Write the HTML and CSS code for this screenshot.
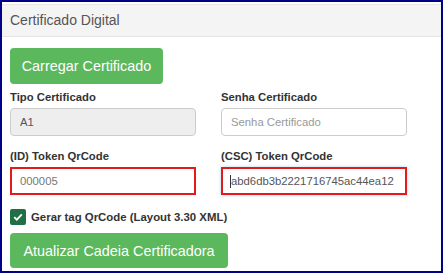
FILE: index.html
```html
<!DOCTYPE html>
<html lang="pt-BR">
<head>
  <meta charset="UTF-8">
  <title>Certificado Digital</title>
  <link rel="stylesheet" href="styles.css">
</head>
<body>
  <div class="frame">
    <div class="panel-heading">Certificado Digital</div>
    <div class="panel-body">
      <button type="button" class="btn btn-load">Carregar Certificado</button>

      <div class="row">
        <div class="field">
          <label for="tipo">Tipo Certificado</label>
          <input type="text" id="tipo" value="A1" disabled>
        </div>
        <div class="field">
          <label for="senha">Senha Certificado</label>
          <input type="password" id="senha" placeholder="Senha Certificado">
        </div>
      </div>

      <div class="row row-token">
        <div class="field">
          <label for="id-token">(ID) Token QrCode</label>
          <input type="text" id="id-token" class="marked" value="000005">
        </div>
        <div class="field">
          <label for="csc-token">(CSC) Token QrCode</label>
          <div class="caret-wrap">
            <input type="text" id="csc-token" class="marked focused" value="abd6db3b2221716745ac44ea12">
            <span class="caret"></span>
          </div>
        </div>
      </div>

      <label class="check">
        <span class="box">
          <svg width="12" height="12" viewBox="0 0 12 12"><path d="M2.2 6.2 L4.8 8.7 L9.8 3.4" fill="none" stroke="#fff" stroke-width="1.8"/></svg>
        </span>
        Gerar tag QrCode (Layout 3.30 XML)
      </label>

      <button type="button" class="btn btn-wide">Atualizar Cadeia Certificadora</button>
    </div>
  </div>
</body>
</html>
```

FILE: styles.css
```css
body { margin: 0; background: #fff; font-family: "Liberation Sans", Arial, sans-serif; }
.frame { width: 443px; height: 273px; box-sizing: border-box; border: 2px solid #000088; padding-top: 2px; overflow: hidden; }
.panel-heading { height: 31px; line-height: 31px; background: #f4f4f4; border-top: 1px solid #e8e8e8; border-bottom: 1px solid #e4e4e4; padding-left: 8px; font-size: 14px; color: #555; }
.panel-body { padding: 11px 0 0 8px; }
.btn { display: block; height: 36px; padding: 0; background: #5cb85c; color: #fff; border: none; border-radius: 4px; font-family: "Liberation Sans", Arial, sans-serif; font-size: 14.4px; text-align: center; }
.btn-load { width: 153px; }
.btn-wide { width: 218px; height: 35px; margin-top: 8px; }
.row { display: grid; grid-template-columns: 186px 186px; column-gap: 25px; margin-top: 6px; }
.row-token { margin-top: 13px; }
.field label { display: block; font-size: 11.3px; line-height: 14px; font-weight: bold; color: #333; margin-bottom: 4px; }
.field input { display: block; width: 100%; height: 28px; box-sizing: border-box; padding: 0 9px; border: 1px solid #ccc; border-radius: 4px; font-family: "Liberation Sans", Arial, sans-serif; font-size: 11.3px; color: #555; background: #fff; }
.field input:disabled { background: #eee; color: #555; }
.field input::placeholder { color: #999; }
.field input.marked { border: 2px solid #e21b1b; border-radius: 0; padding: 0 8px; color: #777; }
.field input.focused { color: #555; box-shadow: 0 0 3px rgba(102,175,233,0.5); }
.caret-wrap { position: relative; }
.caret { position: absolute; left: 9px; top: 8px; width: 1px; height: 13px; background: #333; }
.check { display: flex; align-items: center; margin-top: 14px; height: 16px; font-size: 11.4px; font-weight: bold; color: #333; }
.box { width: 16px; height: 16px; margin-right: 5px; background: #1f7145; border-radius: 2px; display: flex; align-items: center; justify-content: center; }
```
